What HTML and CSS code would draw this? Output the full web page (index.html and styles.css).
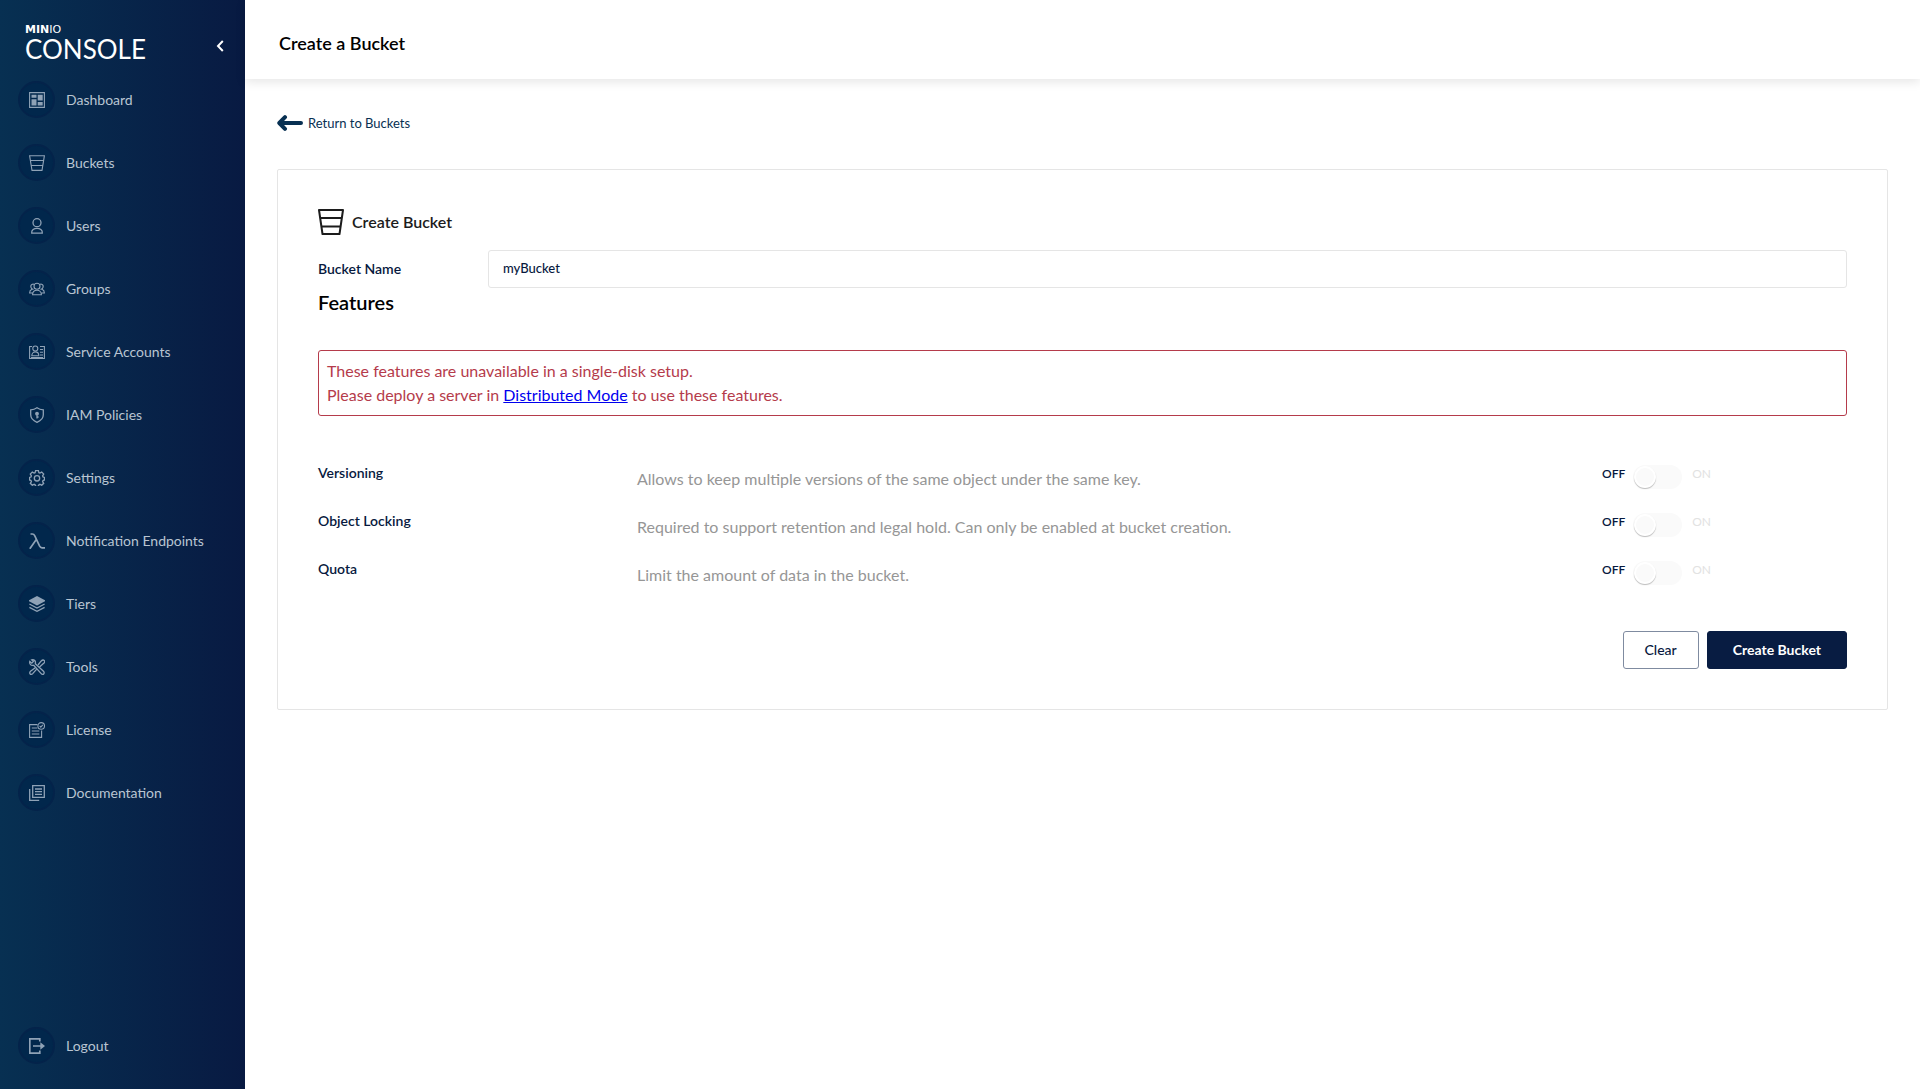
FILE: index.html
```html
<!DOCTYPE html>
<html lang="en">
<head>
<meta charset="utf-8">
<meta name="viewport" content="width=device-width, initial-scale=1">
<title>MinIO Console</title>
<link rel="stylesheet" href="styles.css">
</head>
<body>
<div class="app">
  <aside class="sidebar">
    <div class="brand">
      <div class="logo">
        <span class="logo-top"><b>MIN</b>IO</span>
        <span class="logo-name">CONSOLE</span>
      </div>
      <button class="collapse" type="button" aria-label="Collapse menu">
        <svg width="8" height="12" viewBox="0 0 8 12" fill="none" stroke="currentColor" stroke-width="2"><path d="M6.800 1 2 6l4.800 5"/></svg>
      </button>
    </div>
    <nav class="menu">
      <a class="item" href="#"><span class="dot"><svg class="icon" viewBox="0 0 16 16"><path class="line" d="M.6.6h14.800v14.800H.6z"/><path class="solid" d="M2.500 2.700h5v3h-5zM8.700 2.700h5v5.800h-5zM2.500 7.300h5v6.200h-5zM8.700 10h5v3.500h-5z"/></svg></span>Dashboard</a>
      <a class="item" href="#"><span class="dot"><svg class="icon" viewBox="0 0 16 16"><path class="line" d="M.6.7h14.800L13 15.400H3zM1.600 5.500h12.800M2.300 10.500h11.400"/></svg></span>Buckets</a>
      <a class="item" href="#"><span class="dot"><svg class="icon" viewBox="0 0 16 16"><g class="line wide"><circle cx="8" cy="4.700" r="4"/><path d="M2.700 15.200c-.8-6.400 11.400-6.400 10.600 0z"/></g></svg></span>Users</a>
      <a class="item" href="#"><span class="dot"><svg class="icon" viewBox="0 0 16 16"><g class="line"><circle cx="8" cy="5.200" r="3"/><path d="M3.600 13.800c0-6 8.800-6 8.800 0zM4.600 8.300C1.600 8.500.8 4 3.400 3.200c.7-.2 1.300-.1 1.800.2M11.400 8.300c3 .2 3.800-4.300 1.200-5.100-.7-.2-1.300-.1-1.800.2M3 8.300C1.300 9 .6 10.200.6 12h3M13 8.300c1.700.7 2.400 1.900 2.400 3.700h-3"/></g></svg></span>Groups</a>
      <a class="item" href="#"><span class="dot"><svg class="icon" viewBox="0 0 16 16"><g class="line"><path d="M3 2.500H.6v12h14.800v-12H11"/><circle cx="6.300" cy="4.500" r="2.500"/><path d="M2.800 11.800c0-5.200 7-5.200 7 0zM11 5.500h3M11 8.300h3M11 11h3M2 13.500h12"/></g></svg></span>Service Accounts</a>
      <a class="item" href="#"><span class="dot"><svg class="icon" viewBox="0 0 16 16"><path class="line wide" d="M8 .8c2 1.500 4 2 6.300 2v5c0 4-2.600 6-6.300 7.500-3.700-1.500-6.300-3.500-6.300-7.500v-5C4 2.800 6 2.300 8 .8z"/><circle class="solid" cx="8" cy="6.700" r="1.900"/><path class="line wide" d="M8 7v4.500M8 10h1.600"/></svg></span>IAM Policies</a>
      <a class="item" href="#"><span class="dot"><svg class="icon" viewBox="0 0 16 16"><g class="line wide"><path d="M6.600.7h2.800l.5 2 1 .4 1.800-1 2 2-1.100 1.800.4 1 1.500.5v2.500l-1.500.7-.4 1 1.100 1.700-2 2-1.800-1-1 .4-.5 1.600H6.600l-.5-1.600-1-.4-1.800 1-2-2 1.100-1.700-.4-1-1.500-.7V7.400L2 6.900l.4-1L1.300 4.100l2-2 1.800 1 1-.4z"/><circle cx="8" cy="8.300" r="2.700"/></g></svg></span>Settings</a>
      <a class="item" href="#"><span class="dot"><svg class="icon" viewBox="0 0 16 16"><path class="line bold" d="M1.500 1h1.800c1.300 0 1.900.6 2.500 1.900l4.700 10c.7 1.400 1.300 1.900 2.500 1.900H16M7.300 6.500.8 15.800"/></svg></span>Notification Endpoints</a>
      <a class="item" href="#"><span class="dot"><svg class="icon" viewBox="0 0 16 16"><path class="solid" d="m8 0 8 4.200v1L8 9.500 0 5.200v-1z"/><path class="line wide" d="M.4 8 8 12l7.600-4M.4 11.300l7.600 4 7.600-4"/></svg></span>Tiers</a>
      <a class="item" href="#"><span class="dot"><svg class="icon" viewBox="0 0 16 16"><g class="line wide"><path d="m6.300 4.700 8.200 7.600c1.900 2-.6 4.200-2.300 2.300L4.700 6.300C2 7 .2 5 .8 2.500l2 1.700 1.600-1.600L2.700.8c2.500-.6 4.300 1.300 3.600 3.900z"/><path d="m9 6 3-3.800c1.700-1.700 2.400-1.500 3.200-.7s.8 1.700-.8 3.100L10.500 8M6.300 8.700l-4.800 3.600c-2 2 .4 4.200 2.200 2.300l4-4.500"/></g></svg></span>Tools</a>
      <a class="item" href="#"><span class="dot"><svg class="icon" viewBox="0 0 16 16"><g class="line"><path d="M8.500 2.600H.6v12.800h12V8.500M2.800 6h5.500M2.800 9h7.500M2.800 12h7.500"/><circle cx="12.200" cy="3.900" r="3.300"/><path d="m10.600 3.900 1.200 1.200 2-2.200"/></g></svg></span>License</a>
      <a class="item" href="#"><span class="dot"><svg class="icon" viewBox="0 0 16 16"><g class="line wide"><path d="M3.700.7h11.600v11.600H3.700zM.7 4v11.300h9.500M6 4h7M6 6.700h7M6 9.400h7"/></g></svg></span>Documentation</a>
      <a class="item logout" href="#"><span class="dot"><svg class="icon" viewBox="0 0 16 16"><path class="line bold" d="M10.800 3.500V.8h-10v14.400h10v-2.700M4 8h10"/><path class="solid" d="m11.300 4.200 4.700 3.800-4.700 3.800z"/></svg></span>Logout</a>
    </nav>
  </aside>

  <div class="page">
    <header class="topbar"><h1>Create a Bucket</h1></header>
    <main class="content">
      <a class="back" href="#">
        <svg width="26" height="16" viewBox="0 0 26 16" fill="none" stroke="currentColor" stroke-width="4" stroke-linecap="round" stroke-linejoin="round"><path d="M8 2.200 2.300 8 8 13.800M3 8h21"/></svg>
        Return to Buckets
      </a>
      <form class="card">
        <h2 class="card-title">
          <svg width="26" height="26" viewBox="0 0 26 26" fill="none" stroke="currentColor" stroke-width="2" stroke-linejoin="round"><path d="M1 1h24l-3.500 24h-17zM2.500 9h21M3.500 17.500h19"/></svg>
          Create Bucket
        </h2>
        <div class="field">
          <label for="bucket-name">Bucket Name</label>
          <input id="bucket-name" type="text" value="myBucket">
        </div>
        <h3>Features</h3>
        <div class="alert">These features are unavailable in a single-disk setup.<br>Please deploy a server in <a href="#">Distributed Mode</a> to use these features.</div>
        <div class="features">
          <div class="feature">
            <label for="versioning">Versioning</label>
            <p>Allows to keep multiple versions of the same object under the same key.</p>
            <div class="toggle"><span>OFF</span><input id="versioning" class="switch" type="checkbox" disabled><span class="on">ON</span></div>
          </div>
          <div class="feature">
            <label for="locking">Object Locking</label>
            <p>Required to support retention and legal hold. Can only be enabled at bucket creation.</p>
            <div class="toggle"><span>OFF</span><input id="locking" class="switch" type="checkbox" disabled><span class="on">ON</span></div>
          </div>
          <div class="feature">
            <label for="quota">Quota</label>
            <p>Limit the amount of data in the bucket.</p>
            <div class="toggle"><span>OFF</span><input id="quota" class="switch" type="checkbox" disabled><span class="on">ON</span></div>
          </div>
        </div>
        <div class="actions">
          <button class="btn" type="button">Clear</button>
          <button class="btn primary" type="button">Create Bucket</button>
        </div>
      </form>
    </main>
  </div>
</div>
</body>
</html>
```
FILE: styles.css
```css
*, *::before { box-sizing: border-box; }

body {
  margin: 0;
  font-family: Lato, "Open Sans", sans-serif;
  font-size: 14px;
  color: #000;
  background: #fff;
}

h1, h2, h3, p { margin: 0; }

.app { display: flex; min-height: 100vh; }

/* Sidebar */
.sidebar {
  display: flex;
  flex-direction: column;
  flex: 0 0 245px;
  padding: 25px 18px;
  color: #b9c5d2;
  background: linear-gradient(90deg, #073052 0%, #081a42 100%);
}

.brand {
  display: flex;
  justify-content: space-between;
  height: 56px;
  padding: 0 3px 0 7px;
  color: #fff;
}

.logo { display: flex; flex-direction: column; }
.logo-top { font: 400 11px/10px "DejaVu Sans", sans-serif; }
.logo-top b { font-weight: 700; }
.logo-name { font-size: 26px; line-height: 28px; }

.collapse {
  align-self: flex-start;
  display: flex;
  padding: 15px 0 8px;
  border: 0;
  color: #fff;
  background: none;
}

.menu { display: flex; flex-direction: column; flex: 1; gap: 26px; }

.item {
  display: flex;
  align-items: center;
  gap: 11px;
  color: inherit;
  text-decoration: none;
}

.dot {
  display: flex;
  align-items: center;
  justify-content: center;
  width: 37px;
  height: 37px;
  border: 2px solid #04234a;
  border-radius: 50%;
  background: #01274c;
}

.icon { width: 16px; height: 16px; color: #8fa2b6; }
.line { fill: none; stroke: currentColor; stroke-width: 1.1; }
.wide { stroke-width: 1.3; }
.bold { stroke-width: 1.7; }
.solid { fill: currentColor; }

.logout { margin-top: auto; }

/* Page */
.page { flex: 1; min-width: 0; }

.topbar {
  display: flex;
  align-items: center;
  height: 79px;
  padding: 6px 34px 0;
  box-shadow: 0 3px 10px rgba(0, 0, 0, 0.1);
}

.topbar h1 { font-size: 18px; line-height: 24px; font-weight: 600; }

.content { padding: 32px; }

.back {
  display: inline-flex;
  align-items: center;
  gap: 5px;
  height: 24px;
  font-size: 13px;
  color: #073052;
  text-decoration: none;
}

.card {
  margin-top: 34px;
  padding: 39px 40px 40px;
  border: 1px solid #e5e5e5;
  border-radius: 2px;
}

.card-title {
  display: flex;
  align-items: center;
  gap: 8px;
  font-size: 16px;
  line-height: 26px;
  font-weight: 600;
  color: #1c1c1c;
}

.field {
  display: flex;
  align-items: center;
  margin-top: 15px;
  color: #07193e;
}

.field label { flex: 0 0 170px; padding-bottom: 2px; font-weight: 600; }

.field input {
  flex: 1;
  height: 38px;
  padding: 0 14px 2px;
  border: 1px solid #e5e5e5;
  border-radius: 3px;
  font: 500 13px Lato, sans-serif;
  color: #07193e;
}

h3 { margin-top: 2px; font-size: 20px; line-height: 24px; font-weight: 600; }

.alert {
  margin-top: 36px;
  padding: 8px;
  border: 1px solid #b53b4b;
  border-radius: 3px;
  font-size: 16px;
  line-height: 24px;
  color: #b53b4b;
}

.alert a { color: #0000ee; }

.features { margin-top: 49px; }

.feature {
  display: grid;
  grid-template-columns: 319fr 965fr 245fr;
  align-items: start;
  height: 48px;
}

.feature label { line-height: 16px; font-weight: 600; color: #07193e; }

.feature p { padding-top: 2px; font-size: 16px; line-height: 24px; color: #969696; }

.toggle {
  display: flex;
  align-items: flex-start;
  font-size: 12px;
  line-height: 18px;
  font-weight: 600;
  color: #07193e;
}

.toggle .on { font-weight: 400; color: #e2e2e2; }

.switch {
  appearance: none;
  width: 49px;
  height: 24px;
  margin: 0 10px 0 8px;
  padding: 1px;
  border-radius: 12px;
  background: #fafafa;
}

.switch::before {
  content: "";
  display: block;
  width: 22px;
  height: 22px;
  border: 2px solid #fff;
  border-radius: 50%;
  background: #fafafa;
  box-shadow: 0 1px 1px rgba(0, 0, 0, 0.25);
}

.actions { display: flex; justify-content: flex-end; gap: 8px; margin-top: 22px; }

.btn {
  height: 38px;
  padding: 0 21px 2px;
  border: 1px solid #7f8ba0;
  border-radius: 3px;
  font: 500 14px Lato, sans-serif;
  color: #07193e;
  background: #fff;
}

.btn.primary {
  padding: 0 25px 2px;
  border-color: #081c42;
  font-weight: 700;
  color: #fff;
  background: #081c42;
}
```
